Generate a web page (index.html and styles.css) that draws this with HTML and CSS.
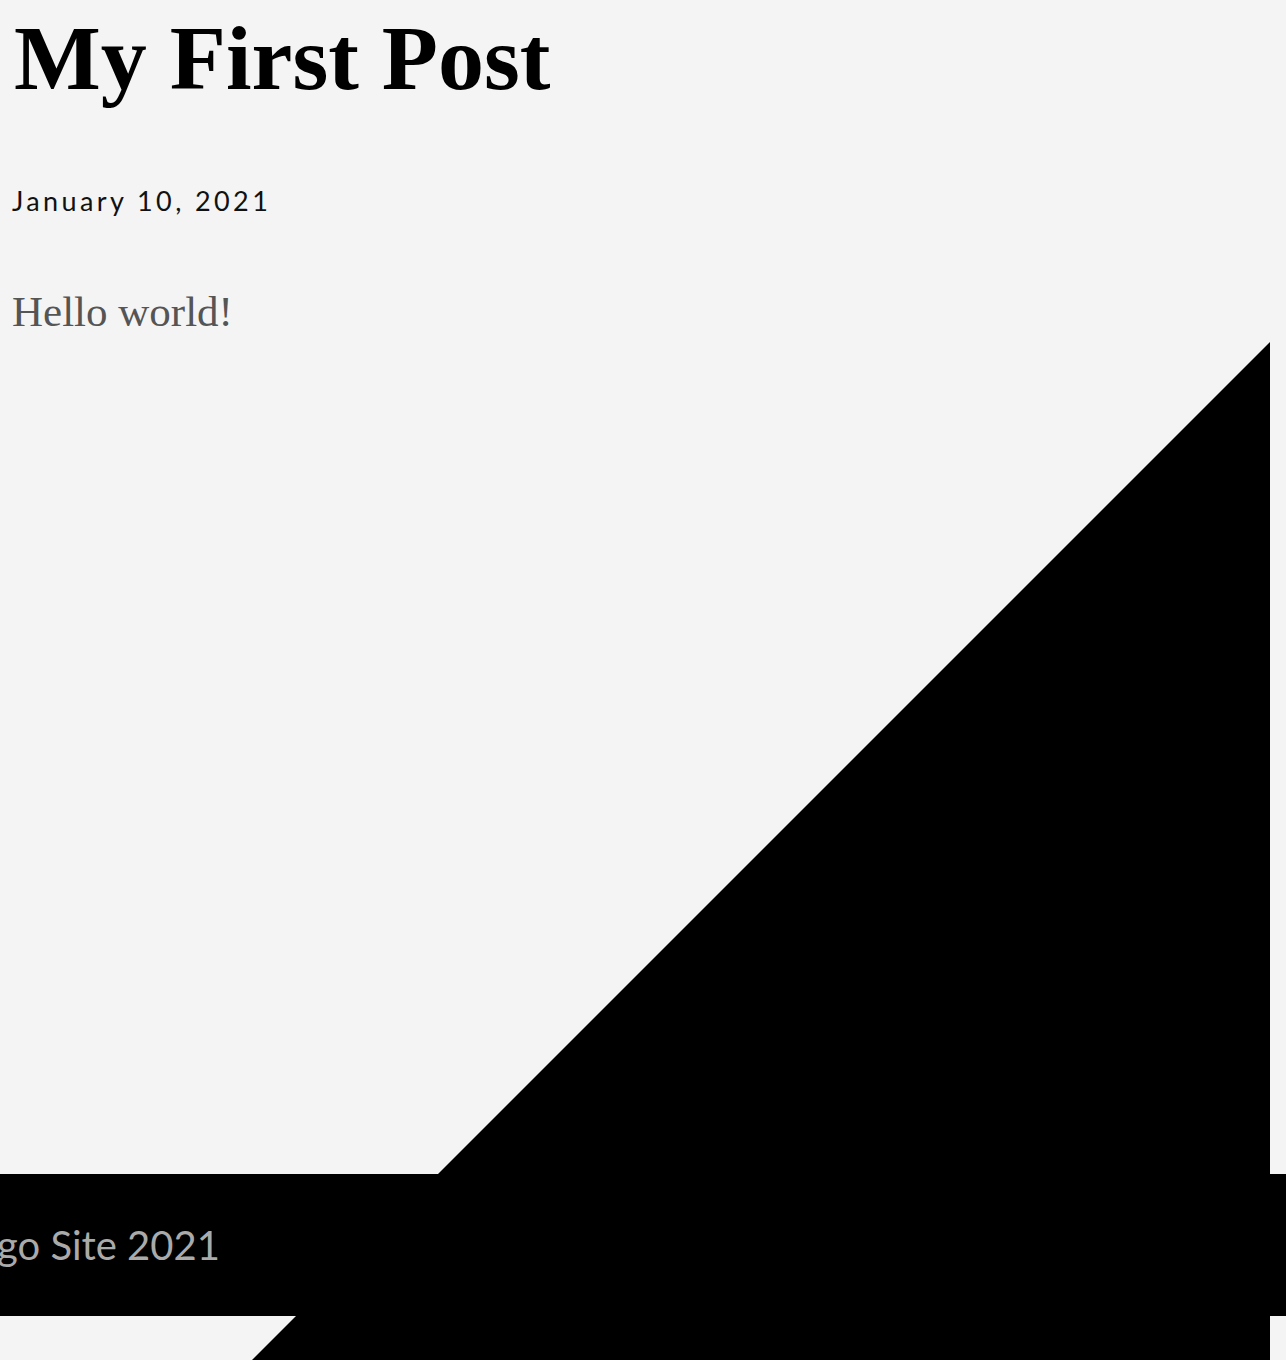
FILE: index.html
```html
<!DOCTYPE html>
<html lang="en">
<head>
<meta charset="utf-8">
<title>My First Post</title>
<link rel="stylesheet" href="styles.css">
</head>
<body>
<div class="shape"></div>
<main class="post">
  <h1 class="post-title">My First Post</h1>
  <p class="post-date">January 10, 2021</p>
  <div class="post-body">
    <p>Hello world!</p>
  </div>
</main>
<footer class="site-footer">
  <p class="footer-text">© Hugo Site 2021</p>
</footer>
</body>
</html>
```
FILE: styles.css
```css
html, body {
  margin: 0;
  padding: 0;
}
body {
  background: #f4f4f4;
  min-height: 1360px;
  display: flex;
  flex-direction: column;
  position: relative;
  overflow: hidden;
}
.shape {
  position: absolute;
  left: 0;
  top: 0;
  width: 1270px;
  height: 1360px;
  background: #000;
  clip-path: polygon(1270px 342px, 1270px 1360px, 252px 1360px);
  z-index: 0;
}
.post {
  position: relative;
  z-index: 1;
  flex: 1;
  padding: 3px 12px 0 14px;
}
.post-title {
  font-family: "Liberation Serif", "Times New Roman", serif;
  font-weight: 700;
  font-size: 92px;
  line-height: 110px;
  margin: 0;
  color: #000;
}
.post-date {
  font-family: "Lato", "Open Sans", sans-serif;
  font-size: 27px;
  letter-spacing: 3.4px;
  line-height: 40px;
  margin: 68px 0 0 -2px;
  color: #111;
}
.post-body p {
  font-family: "Liberation Serif", "Times New Roman", serif;
  font-size: 43px;
  line-height: 50px;
  margin: 66px 0 0 -2px;
  color: #555;
}
.site-footer {
  position: relative;
  z-index: 1;
  background: #000;
  height: 142px;
  margin-bottom: 44px;
  display: flex;
  align-items: center;
}
.footer-text {
  font-family: "Lato", "Open Sans", sans-serif;
  font-size: 40px;
  color: #aaa;
  margin: 0 0 0 -99px;
  white-space: nowrap;
}
```
